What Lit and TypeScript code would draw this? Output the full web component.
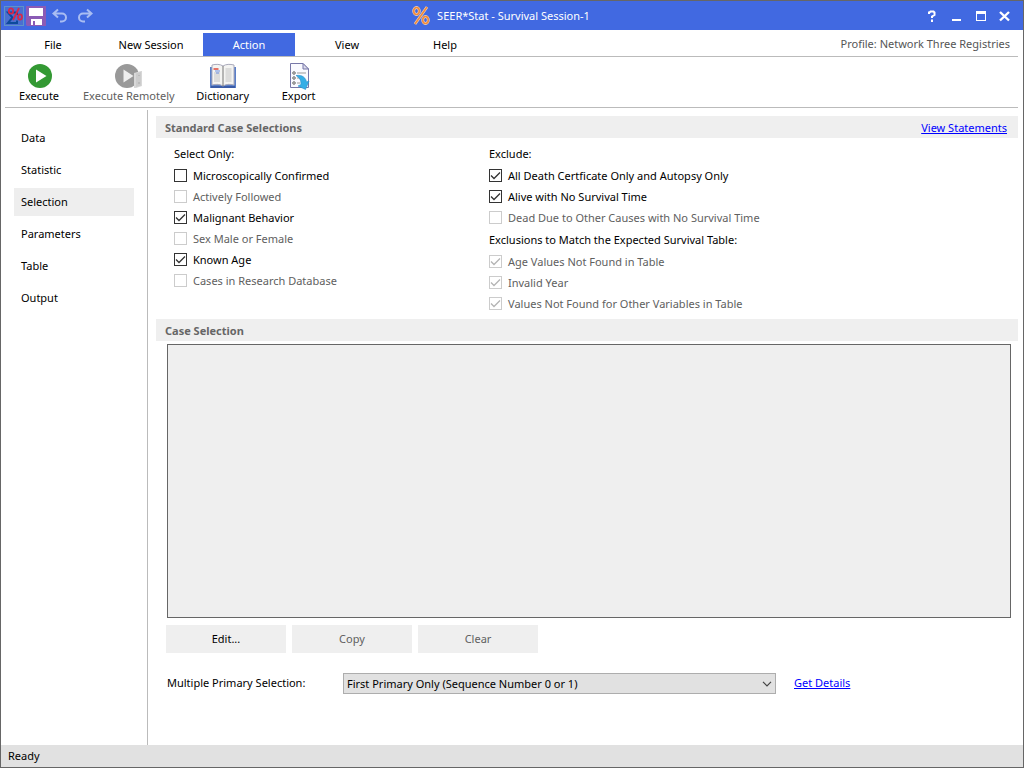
import { LitElement, html, css, svg } from "lit";
import { customElement, property, state } from "lit/decorators.js";

const icons = {
  app: svg`<svg width="20" height="20" viewBox="0 0 20 20">
    <rect x=".5" y=".5" width="19" height="19" fill="#4a6fd0" stroke="#5e93c8"/>
    <path d="M13 9V6.500H4l4.500 5L4 17h9v-2.500" fill="none" stroke="#0c4a9c" stroke-width="2"/>
    <g fill="none" stroke="#d8284a" stroke-width="1.800"><ellipse cx="7" cy="5" rx="2.200" ry="2.700"/><ellipse cx="16" cy="11" rx="2" ry="2.700"/><path d="M15 2 9 14"/></g></svg>`,
  save: svg`<svg width="20" height="20" viewBox="0 0 20 20">
    <path d="M0 0h20v20H1l-1-1z" fill="#8b5bb5"/><path d="M3 2h14v8H3zM5 13h11v6H5z" fill="#fff"/><path d="M7 15h2v4H7z" fill="#8b5bb5"/></svg>`,
  undo: svg`<svg width="16" height="16" viewBox="0 0 16 16" fill="none" stroke="#a9bdf2" stroke-width="2">
    <path d="M6 1.500 1.500 5.500 6 9.500M2 5.500h8a4 4 0 0 1 0 8H8"/></svg>`,
  redo: svg`<svg width="16" height="16" viewBox="0 0 16 16" fill="none" stroke="#a9bdf2" stroke-width="2">
    <path d="m10 1.500 4.500 4-4.500 4M14 5.500H6a4 4 0 0 0 0 8h2"/></svg>`,
  percent: svg`<svg width="18" height="19" viewBox="0 0 18 19" fill="none">
    <g stroke="#f5d9c0" stroke-width="2.800"><ellipse cx="4.500" cy="5" rx="2.800" ry="3.500"/><ellipse cx="13.500" cy="14" rx="2.800" ry="3.500"/><path d="M15 1 3 18"/></g>
    <g stroke="#ef8a3c" stroke-width="1.600"><ellipse cx="4.500" cy="5" rx="2.800" ry="3.500"/><ellipse cx="13.500" cy="14" rx="2.800" ry="3.500"/><path d="M15 1 3 18"/></g></svg>`,
  help: svg`<svg width="24" height="24" viewBox="0 0 24 24" fill="none" stroke="#fff" stroke-width="2">
    <path d="M9 10V8.500h.5l1-1h3l1 1V11L12 12.500V14M12 15.500V18"/></svg>`,
  minimize: svg`<svg width="24" height="24" viewBox="0 0 24 24"><path d="M8 15h9v2H8z" fill="#fff"/></svg>`,
  maximize: svg`<svg width="24" height="24" viewBox="0 0 24 24"><path d="M8 7h10v10H8zM9 10v6h8v-6z" fill="#fff" fill-rule="evenodd"/></svg>`,
  close: svg`<svg width="24" height="24" viewBox="0 0 24 24"><path d="m8 8 9 8.500M17 8l-9 8.500" stroke="#fff" stroke-width="2.400"/></svg>`,
  execute: svg`<svg width="28" height="28" viewBox="0 0 28 28"><circle cx="15" cy="14" r="12" fill="#339933"/><path d="M11 7.500v13L21.500 14z" fill="#fff"/></svg>`,
  remote: svg`<svg width="28" height="28" viewBox="0 0 28 28"><circle cx="12" cy="14" r="12" fill="#999"/><path d="M8.500 7.500v13L18.500 14z" fill="#eee"/>
    <path d="m19 11 7-2h1v15l-6 2h-2z" fill="#d8d8d8"/><path d="M21 11.500 26 10v13.500l-5 1.500z" fill="#ccc"/><path d="M24 13v1M24 20v2" stroke="#aaa"/></svg>`,
  dictionary: svg`<svg width="28" height="28" viewBox="0 0 28 28">
    <path d="M1 5h26v21H1z" fill="#5a7fc8"/><path d="M2 25h24" stroke="#3a5ca8" stroke-width="2"/>
    <path d="M3 3c4-1 8-1 11 1 3-2 7-2 11-1v20c-4-1-8-1-11 1-3-2-7-2-11-1z" fill="#f4f4f2" stroke="#aab"/>
    <path d="M14 4v20" stroke="#777"/>
    <path d="M5 11h6M5 13h6M5 15h6M5 17h6M5 19h6M16.500 7h6M16.500 9h6M16.500 11h6M16.500 13h6M16.500 15h6M16.500 17h6M16.500 19h6" stroke="#c4c4c4"/>
    <path d="M4.500 7h5" stroke="#e04838" stroke-width="1.500"/><path d="M6 9h5M7 11h3" stroke="#6a8fe0"/></svg>`,
  exporting: svg`<svg width="28" height="28" viewBox="0 0 28 28">
    <path d="M5.500 1.500H18l5.500 5.500v18.500h-18z" fill="#fafaff" stroke="#7777a8"/><path d="M18 1.500V7h5.500z" fill="#dcdcec" stroke="#7777a8"/>
    <g fill="#ccc" stroke="#777"><circle cx="9" cy="11" r="1.300"/><circle cx="9" cy="16" r="1.300"/><circle cx="9" cy="21" r="1.300"/></g>
    <path d="M12 11h9M12 16h3M12 21h3" stroke="#999"/>
    <path d="M11 13.500c7-1 10 3 10.500 6.500l2.500-1-3.500 8.500L13 24l3-1.500c0-4-1-6.500-5-9z" fill="#35aee6" stroke="#2c8fc9" stroke-width=".6"/></svg>`,
};

@customElement("check-option")
class CheckOption extends LitElement {
  @property() label = "";
  @property({ type: Boolean }) checked = false;
  @property({ type: Boolean }) disabled = false;

  static styles = css`
    :host { display: block; }
    .option { display: flex; align-items: center; gap: 6px; height: 21px; }
    .box {
      appearance: none; flex: none; width: 13px; height: 13px; margin: 0;
      border: 1px solid #333; background: #fff;
    }
    .box:checked {
      background-image: url("data:image/svg+xml,%3Csvg xmlns='http://www.w3.org/2000/svg' viewBox='0 0 11 11'%3E%3Cpath d='M1 5.500 4 8.500 10 2.500' fill='none' stroke='%23333' stroke-width='1.300'/%3E%3C/svg%3E");
    }
    .box:disabled { border-color: #ccc; }
    .box:checked:disabled {
      background-image: url("data:image/svg+xml,%3Csvg xmlns='http://www.w3.org/2000/svg' viewBox='0 0 11 11'%3E%3Cpath d='M1 5.500 4 8.500 10 2.500' fill='none' stroke='%23b4b4b4' stroke-width='1.300'/%3E%3C/svg%3E");
    }
    .box:disabled + .text { color: #606060; }
  `;

  render() {
    return html`<label class="option">
      <input class="box" type="checkbox" .checked=${this.checked} ?disabled=${this.disabled}
        @change=${(e: Event) => (this.checked = (e.target as HTMLInputElement).checked)}>
      <span class="text">${this.label}</span>
    </label>`;
  }
}

type Option = [label: string, checked: boolean, disabled: boolean];

const selectOnly: Option[] = [
  ["Microscopically Confirmed", false, false],
  ["Actively Followed", false, true],
  ["Malignant Behavior", true, false],
  ["Sex Male or Female", false, true],
  ["Known Age", true, false],
  ["Cases in Research Database", false, true],
];
const exclude: Option[] = [
  ["All Death Certficate Only and Autopsy Only", true, false],
  ["Alive with No Survival Time", true, false],
  ["Dead Due to Other Causes with No Survival Time", false, true],
];
const expectedTable: Option[] = [
  ["Age Values Not Found in Table", true, true],
  ["Invalid Year", true, true],
  ["Values Not Found for Other Variables in Table", true, true],
];

@customElement("app-root")
class AppRoot extends LitElement {
  @state() menu = "Action";
  @state() page = "Selection";

  static styles = css`
    * { box-sizing: border-box; }
    :host {
      display: flex; flex-direction: column; box-sizing: border-box; min-height: 100vh;
      border: 1px solid #666; background: #fff; color: #000;
      font: 11px/16px "Noto Sans", "Open Sans", sans-serif;
    }
    button, select { font: inherit; color: inherit; }
    button { border: 0; padding: 0; background: none; }
    svg { display: block; flex: none; }
    a { color: #00f; }

    .titlebar { display: flex; align-items: center; height: 29px; padding: 0 7px 0 3px; background: #4169e1; color: #fff; }
    .quick { display: flex; align-items: center; gap: 2px; }
    .quick .history { width: 23px; display: flex; justify-content: center; }
    .title { flex: 1; display: flex; align-items: center; justify-content: center; gap: 7px; padding-right: 14px; }
    .window-buttons { display: flex; }

    .menubar { display: flex; align-items: flex-end; gap: 6px; height: 27px; margin: 0 5px 0 4px; padding-left: 2px; border-bottom: 1px solid #bbb; }
    .tab { width: 92px; height: 23px; }
    .tab.active { background: #4169e1; color: #fff; }
    .profile { margin-left: auto; padding: 0 8px 4px 0; color: #555; }

    .toolbar { display: flex; height: 51px; margin: 0 5px 0 4px; border-bottom: 1px solid #bbb; }
    .tool { min-width: 68px; height: 42px; padding: 0 10px; display: flex; flex-direction: column; align-items: center; justify-content: space-between; margin-top: 5px; }
    .tool svg { margin-bottom: -2px; }
    .tool.wide { min-width: 76px; }
    .tool.remote { min-width: 110px; }
    .tool:disabled, .action:disabled { color: #606060; }

    .body { flex: 1; display: flex; }
    .sidebar { width: 147px; margin-top: 2px; padding: 14px 13px; border-right: 1px solid #bbb; display: flex; flex-direction: column; gap: 4px; }
    .page { height: 28px; padding: 0 7px; text-align: left; }
    .page.active { background: #eee; }

    .content { flex: 1; display: flex; flex-direction: column; padding: 8px 5px 51px 8px; }
    .section { display: flex; align-items: center; justify-content: space-between; height: 22px; padding: 2px 11px 0 9px; background: #efefef; }
    .heading { margin: 0; font-size: 11px; color: #666; }
    .options { display: grid; grid-template-columns: 315px 1fr; padding: 5px 18px; }
    .group { margin: 0; padding: 0; border: 0; min-width: 0; }
    .stack { display: grid; gap: 1px; align-content: start; }
    .caption { height: 22px; padding: 0; line-height: 22px; }
    .cases { flex: 1; margin: 3px 7px 0 11px; border: 1px solid #666; background: #efefef; }
    .actions { display: flex; gap: 6px; margin: 7px 10px 20px; }
    .action { width: 120px; height: 28px; background: #efefef; }
    .primary { display: flex; align-items: center; padding-left: 11px; }
    .primary-label { width: 176px; padding-bottom: 2px; }
    .combo { position: relative; width: 433px; display: flex; align-items: center; }
    .select { appearance: none; width: 100%; height: 21px; padding: 0 24px 0 3px; border: 1px solid #adadad; border-radius: 0; background: #e1e1e1; }
    .chevron { position: absolute; right: 4px; pointer-events: none; }
    .details { margin-left: 18px; padding-bottom: 2px; }
    .status { height: 22px; padding: 3px 7px; background: #e1e1e1; }
  `;

  private options(list: Option[]) {
    return list.map(([label, checked, disabled]) =>
      html`<check-option .label=${label} .checked=${checked} .disabled=${disabled}></check-option>`);
  }

  render() {
    return html`
      <header class="titlebar">
        <div class="quick">
          <button aria-label="SEER*Stat">${icons.app}</button>
          <button aria-label="Save">${icons.save}</button>
          <button class="history" aria-label="Undo">${icons.undo}</button>
          <button class="history" aria-label="Redo">${icons.redo}</button>
        </div>
        <div class="title">${icons.percent}<span>SEER*Stat - Survival Session-1</span></div>
        <div class="window-buttons">
          <button aria-label="Help">${icons.help}</button>
          <button aria-label="Minimize">${icons.minimize}</button>
          <button aria-label="Maximize">${icons.maximize}</button>
          <button aria-label="Close">${icons.close}</button>
        </div>
      </header>
      <nav class="menubar">
        ${["File", "New Session", "Action", "View", "Help"].map((name) => html`
          <button class="tab ${name === this.menu ? "active" : ""}" @click=${() => (this.menu = name)}>${name}</button>`)}
        <span class="profile">Profile: Network Three Registries</span>
      </nav>
      <div class="toolbar">
        <button class="tool">${icons.execute}<span>Execute</span></button>
        <button class="tool remote" disabled>${icons.remote}<span>Execute Remotely</span></button>
        <button class="tool wide">${icons.dictionary}<span>Dictionary</span></button>
        <button class="tool wide">${icons.exporting}<span>Export</span></button>
      </div>
      <div class="body">
        <nav class="sidebar">
          ${["Data", "Statistic", "Selection", "Parameters", "Table", "Output"].map((name) => html`
            <button class="page ${name === this.page ? "active" : ""}" @click=${() => (this.page = name)}>${name}</button>`)}
        </nav>
        <main class="content">
          <div class="section"><h2 class="heading">Standard Case Selections</h2><a href="#statements">View Statements</a></div>
          <div class="options">
            <fieldset class="group">
              <legend class="caption">Select Only:</legend>
              ${this.options(selectOnly)}
            </fieldset>
            <div class="stack">
              <fieldset class="group">
                <legend class="caption">Exclude:</legend>
                ${this.options(exclude)}
              </fieldset>
              <fieldset class="group">
                <legend class="caption">Exclusions to Match the Expected Survival Table:</legend>
                ${this.options(expectedTable)}
              </fieldset>
            </div>
          </div>
          <div class="section"><h2 class="heading">Case Selection</h2></div>
          <div class="cases"></div>
          <div class="actions">
            <button class="action">Edit...</button>
            <button class="action" disabled>Copy</button>
            <button class="action" disabled>Clear</button>
          </div>
          <div class="primary">
            <label class="primary-label" for="primary">Multiple Primary Selection:</label>
            <div class="combo">
              <select id="primary" class="select"><option>First Primary Only (Sequence Number 0 or 1)</option></select>
              <svg class="chevron" width="10" height="6" viewBox="0 0 10 6"><path d="m1 .8 4 4 4-4" fill="none" stroke="#444" stroke-width="1.200"/></svg>
            </div>
            <a class="details" href="#details">Get Details</a>
          </div>
        </main>
      </div>
      <footer class="status">Ready</footer>
    `;
  }
}
